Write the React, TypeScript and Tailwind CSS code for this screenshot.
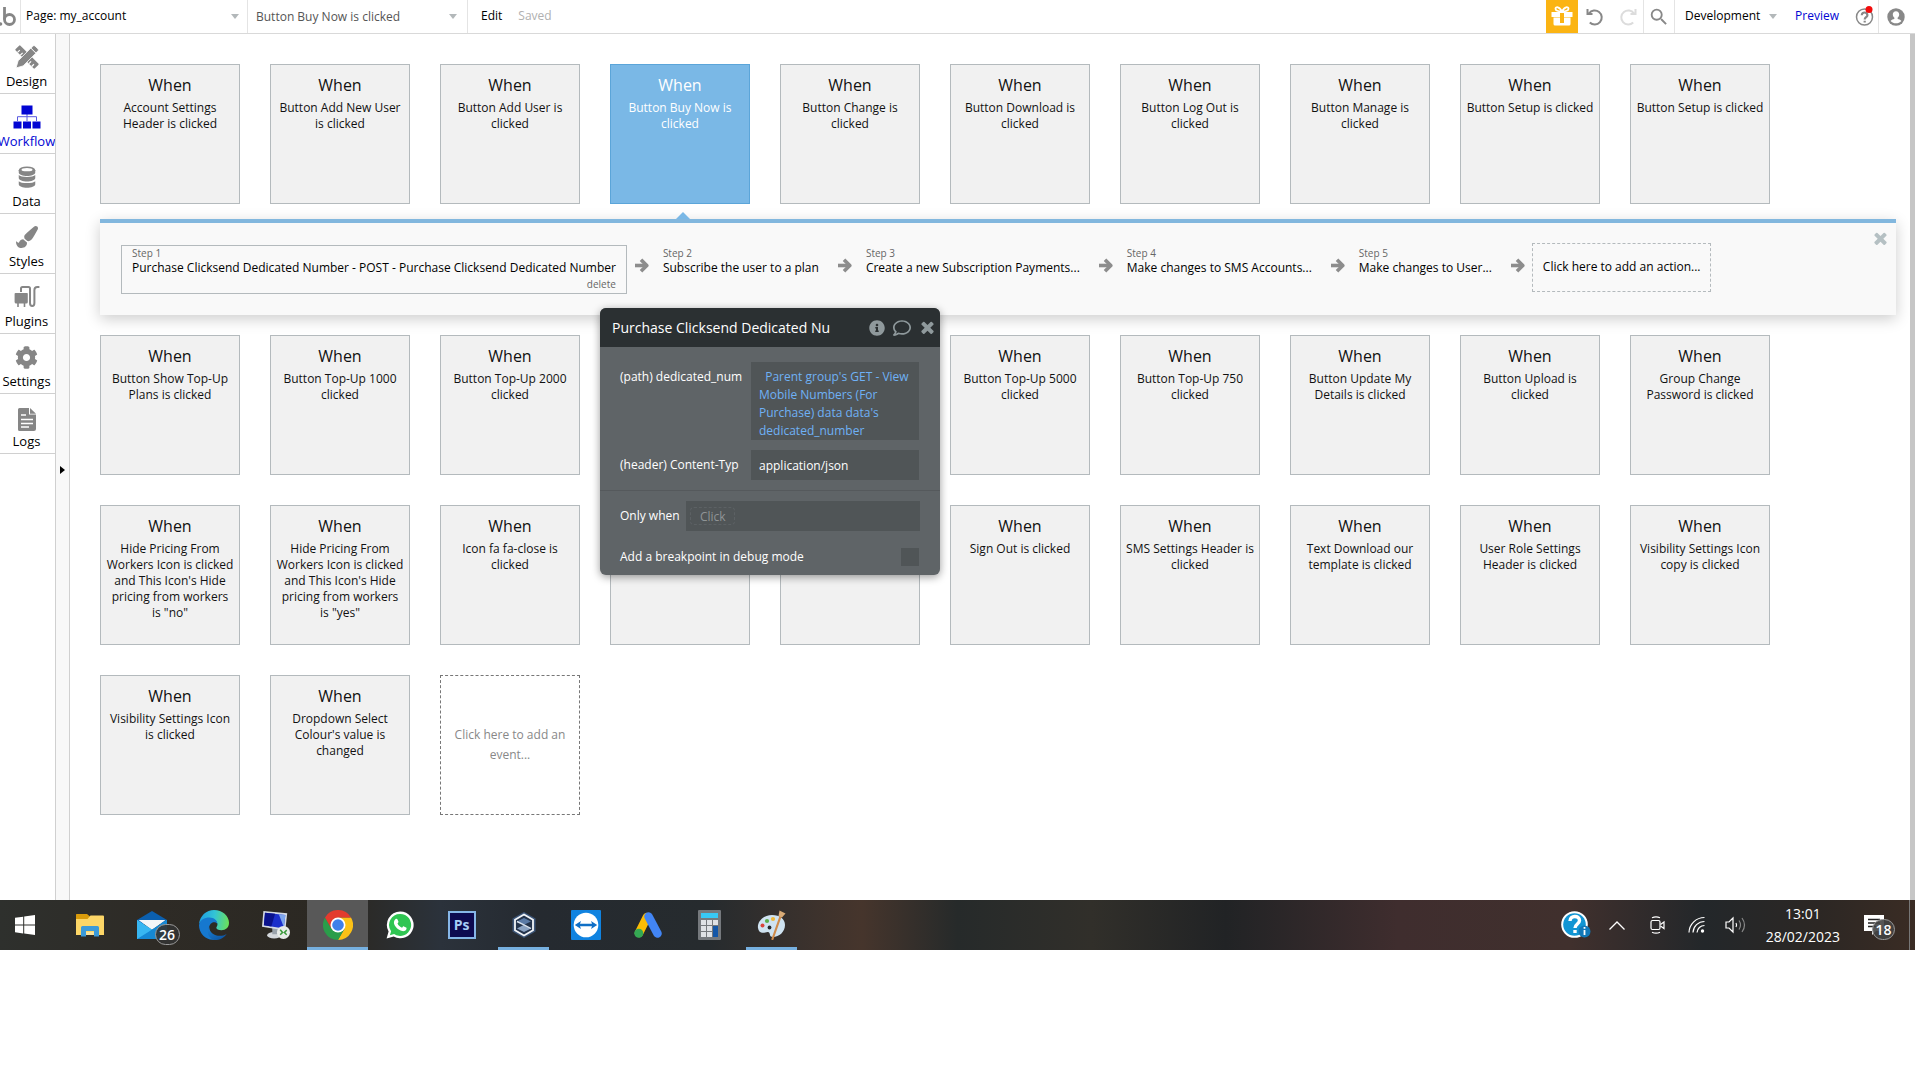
import type { ReactNode } from "react";
import { FaPaintBrush, FaCog, FaInfoCircle, FaRegComment } from "react-icons/fa";
import { MdSearch } from "react-icons/md";

interface WorkflowEvent {
  text: string | null;
  active?: boolean;
}

const topEvents: WorkflowEvent[] = [
  { text: "Account Settings Header is clicked" },
  { text: "Button Add New User is clicked" },
  { text: "Button Add User is clicked" },
  { text: "Button Buy Now is clicked", active: true },
  { text: "Button Change is clicked" },
  { text: "Button Download is clicked" },
  { text: "Button Log Out is clicked" },
  { text: "Button Manage is clicked" },
  { text: "Button Setup is clicked" },
  { text: "Button Setup is clicked" },
];

const otherEvents: WorkflowEvent[] = [
  { text: "Button Show Top-Up Plans is clicked" },
  { text: "Button Top-Up 1000 clicked" },
  { text: "Button Top-Up 2000 clicked" },
  { text: null },
  { text: null },
  { text: "Button Top-Up 5000 clicked" },
  { text: "Button Top-Up 750 clicked" },
  { text: "Button Update My Details is clicked" },
  { text: "Button Upload is clicked" },
  { text: "Group Change Password is clicked" },
  { text: "Hide Pricing From Workers Icon is clicked and This Icon's Hide pricing from workers is \"no\"" },
  { text: "Hide Pricing From Workers Icon is clicked and This Icon's Hide pricing from workers is \"yes\"" },
  { text: "Icon fa fa-close is clicked" },
  { text: null },
  { text: null },
  { text: "Sign Out is clicked" },
  { text: "SMS Settings Header is clicked" },
  { text: "Text Download our template is clicked" },
  { text: "User Role Settings Header is clicked" },
  { text: "Visibility Settings Icon copy is clicked" },
  { text: "Visibility Settings Icon is clicked" },
  { text: "Dropdown Select Colour's value is changed" },
];

const steps = [
  "Purchase Clicksend Dedicated Number - POST - Purchase Clicksend Dedicated Number",
  "Subscribe the user to a plan",
  "Create a new Subscription Payments...",
  "Make changes to SMS Accounts...",
  "Make changes to User...",
];

/* ---------- small icons ---------- */

function CloseIcon({ className }: { className?: string }) {
  return (
    <svg viewBox="300 300 1192 1256" className={className} fill="currentColor" aria-hidden="true">
      <path d="M1490 1322q0 40-28 68l-136 136q-28 28-68 28t-68-28l-294-294-294 294q-28 28-68 28t-68-28l-136-136q-28-28-28-68t28-68l294-294-294-294q-28-28-28-68t28-68l136-136q28-28 68-28t68 28l294 294 294-294q28-28 68-28t68 28l136 136q28 28 28 68t-28 68l-294 294 294 294q28 28 28 68z" />
    </svg>
  );
}

function StepArrow() {
  return (
    <svg viewBox="0 0 14 14" className="mt-[13px] h-[15px] w-[14px]" fill="none" stroke="#8d8d8d" strokeWidth="3.6" aria-hidden="true">
      <path d="M0 7h11" />
      <path d="M6 1.200L11.800 7 6 12.800" strokeLinejoin="round" />
    </svg>
  );
}

function Caret() {
  return (
    <svg viewBox="0 0 8 5" className="pointer-events-none h-[5px] w-2 shrink-0" fill="#b3b8ba" aria-hidden="true">
      <path d="M0 0h8L4 5z" />
    </svg>
  );
}

function DesignIcon() {
  return (
    <svg viewBox="0 0 24 24" className="h-6 w-6" aria-hidden="true">
      <g transform="rotate(-45 12 12)" fill="#868686">
        <rect x="8.600" y="-1.600" width="6.800" height="27.200" rx="1" />
        <path d="M8.600 2h3.200M8.600 6h3.200M8.600 18h3.200M8.600 22h3.200" stroke="#fff" strokeWidth="1.200" />
      </g>
      <g transform="rotate(45 12 12)" fill="#868686" stroke="#fff" strokeWidth="0.800">
        <rect x="8.400" y="-1.500" width="7.200" height="4.500" rx="1.500" />
        <path d="M8.400 3h7.200v18L12 27.500 8.400 21z" />
      </g>
    </svg>
  );
}

function WorkflowIcon() {
  return (
    <svg viewBox="0 0 28 24" className="h-6 w-7" aria-hidden="true">
      <path d="M14 8v8M4.500 16v-4.300h19V16" stroke="#5a5ae0" strokeWidth="1" fill="none" />
      <g fill="#0205d3">
        <rect x="8.500" y="0.500" width="11" height="9" />
        <rect x="0.500" y="16.500" width="8" height="7" />
        <rect x="10" y="16.500" width="8" height="7" />
        <rect x="19.500" y="16.500" width="8" height="7" />
      </g>
    </svg>
  );
}

function DataIcon() {
  return (
    <svg viewBox="0 0 18 24" className="h-[22px] w-[18px]" aria-hidden="true">
      <g fill="#868686">
        <path d="M0 16.500c2 2.800 16 2.800 18 0V20c0 5-18 5-18 0z" />
        <path d="M0 9.800c2 2.800 16 2.800 18 0v3.400c0 5-18 5-18 0z" />
        <path d="M0 4.500h18v2.600c0 5-18 5-18 0z" />
        <ellipse cx="9" cy="4.500" rx="9" ry="4" />
      </g>
      <ellipse cx="9" cy="4" rx="6" ry="1.800" fill="#fff" />
    </svg>
  );
}

function PluginIcon() {
  return (
    <svg viewBox="0 0 26 24" className="h-6 w-[26px]" fill="none" aria-hidden="true">
      <path d="M7 7V3.500Q7 2 8.500 2h6q1.500 0 1.500 1.500V18q0 3 2.200 3t2.200-3V5q0-3 3-3h2" stroke="#868686" strokeWidth="2" />
      <path d="M1.500 8h11.500q.8 0 .8.800V17q0 1.500-1.500 1.500h-10Q.6 18.500.6 17V9q0-1 .9-1z" fill="#868686" />
      <path d="M4 18v4M10.500 18v4" stroke="#868686" strokeWidth="1.600" />
    </svg>
  );
}

function LogsIcon() {
  return (
    <svg viewBox="0 0 18 23" className="mt-1 h-[23px] w-[18px]" aria-hidden="true">
      <path d="M1.500 0H11v6.500h7V21q0 2-2 2H1.500Q0 23 0 21.500v-20Q0 0 1.500 0z" fill="#868686" />
      <path d="M12 0l6 5.800h-6z" fill="#868686" />
      <path d="M3 7h5M3 11.500h12M3 15.500h12M3 19h8" stroke="#fff" strokeWidth="1.300" />
    </svg>
  );
}

/* ---------- taskbar icons ---------- */

function WindowsIcon() {
  return (
    <svg viewBox="0 0 20 20" className="h-5 w-5" fill="#fff" aria-hidden="true">
      <path d="M0 2.800l8.200-1.100v7.900H0zM9.200 1.500L20 0v9.600H9.200zM0 10.500h8.200v7.900L0 17.300zM9.200 10.500H20V20L9.200 18.500z" />
    </svg>
  );
}

function FolderIcon() {
  return (
    <svg viewBox="0 0 28 24" className="h-6 w-7" aria-hidden="true">
      <path d="M0 1.500Q0 1 .5 1H11l3 2.500V8H0z" fill="#d99b0b" />
      <path d="M0 6h11.500l3-3.500H27q1 0 1 1V22H0z" fill="#fcd667" />
      <path d="M5 23.500V14.500Q5 13 6.500 13h15q1.500 0 1.500 1.500v9h-5V18h-8v5.500z" fill="#3b9ad9" />
      <path d="M10 19h8v3h-8z" fill="#fbe39a" />
    </svg>
  );
}

function MailIcon() {
  return (
    <svg viewBox="0 0 30 28" className="h-7 w-[30px]" aria-hidden="true">
      <path d="M0 9L15 0l15 9v4H0z" fill="#0b5fae" />
      <path d="M1.500 9h27L15 19z" fill="#f4f6f8" />
      <path d="M0 9l15 10L30 9v19H0z" fill="#2ba5e6" />
      <path d="M0 28L15 18.500 30 9v19z" fill="#1688d4" />
      <path d="M0 9l15 9.500L0 28z" fill="#38b6f1" />
    </svg>
  );
}

function EdgeIcon() {
  return (
    <svg viewBox="0 0 32 32" className="h-[30px] w-[30px]" aria-hidden="true">
      <defs>
        <linearGradient id="edgeTop" x1="0" y1="0.400" x2="1" y2="0.500">
          <stop offset="0" stopColor="#1d9de2" />
          <stop offset="0.500" stopColor="#33c4d6" />
          <stop offset="1" stopColor="#6be05a" />
        </linearGradient>
        <linearGradient id="edgeLow" x1="0" y1="0" x2="1" y2="1">
          <stop offset="0" stopColor="#1a7fd4" />
          <stop offset="1" stopColor="#0c4f9c" />
        </linearGradient>
      </defs>
      <path d="M0 15C1 6 8 0 16 0c9 0 16 6.500 16 13.500 0 5-3.500 8-8 8-3.500 0-5.500-1.200-5.500-2.500 0-1 1.200-1.500 1.200-3.700C19.700 12 16 9 11.500 9 6 9 2 11.500 0 15z" fill="url(#edgeTop)" />
      <path d="M0 16C1 10.500 6 8 11 8c5 0 8.500 3 8.700 7-1-2-3.700-2.500-5.700-1.500-5 2.500-5.500 14 3 18C8 33 0 25.500 0 16z" fill="#1678cf" />
      <path d="M11 18c0 6 5.500 9.500 11 9.500 3 0 5.500-.7 7.500-2C27 29.500 22 32 17 32c-7-1-9.500-9-6-14z" fill="url(#edgeLow)" />
    </svg>
  );
}

function RemoteIcon() {
  return (
    <svg viewBox="0 0 30 32" className="h-[30px] w-7" aria-hidden="true">
      <ellipse cx="13" cy="27" rx="7.500" ry="3.500" fill="#d4d8dc" />
      <path d="M11 18l7 1v7h-7z" fill="#9aa3ab" />
      <path d="M1.500 1L27 3.500 25 22 0 18z" fill="#d5dbe4" />
      <path d="M3.200 3L25 5.200 23.300 19.800 2 16.300z" fill="#1b2fcb" />
      <path d="M3.200 3L14 4l-4 13.500-8-1.200z" fill="#0a128c" />
      <path d="M18 4.500l7 .7-1.500 13.500z" fill="#7da6ee" />
      <circle cx="23" cy="24" r="7" fill="#e8ece8" />
      <path d="M19.500 21l2.500 3-2.500 2.500M26.500 21.500l-2.500 2.500 2.500 2.500" stroke="#3a9a3a" strokeWidth="1.600" fill="none" />
    </svg>
  );
}

function ChromeIcon() {
  return (
    <svg viewBox="0 0 32 32" className="h-[30px] w-[30px]" aria-hidden="true">
      <path d="M16 8h13.860A16 16 0 0 1 16 32l6.930-12z" fill="#fbc116" />
      <path d="M9.070 20L2.140 8A16 16 0 0 0 16 32l6.930-12z" fill="#2a9d4a" />
      <path d="M9.070 20L2.140 8A16 16 0 0 1 29.860 8H16z" fill="#e33b2e" />
      <circle cx="16" cy="16" r="8" fill="#fff" />
      <circle cx="16" cy="16" r="6.200" fill="#3f80ea" />
    </svg>
  );
}

function WhatsAppIcon() {
  return (
    <svg viewBox="0 0 28 28" className="h-7 w-7" aria-hidden="true">
      <path d="M14.200.5A13.400 13.400 0 0 0 2.600 20.600L.6 27.500l7.100-1.900A13.400 13.400 0 1 0 14.200.5z" fill="#fff" />
      <path d="M14.200 2.900A11 11 0 0 0 5.100 20.200l-1.200 4 4.200-1.100A11 11 0 1 0 14.200 2.900z" fill="#2fc552" />
      <path d="M9.900 7.800c.5-.3 1.200-.2 1.500.4l1 2.300c.2.500 0 .8-.9 1.900.9 2 2.600 3.500 4.600 4.300 1-1.300 1.300-1.500 1.800-1.300l2.200 1.100c.6.300.6.800.3 1.700-.5 1.500-2.600 2.300-4.200 1.900-4.300-1.100-7.600-4.600-8.200-7.500-.3-1.700.4-3.900 1.900-4.800z" fill="#fff" />
    </svg>
  );
}

function BlueStackIcon() {
  return (
    <svg viewBox="0 0 26 28" className="h-7 w-[26px]" aria-hidden="true">
      <path d="M13 1l11.500 6.500v13L13 27 1.500 20.500v-13z" fill="#3c5578" />
      <path d="M13 3.500l9 5.200v10.600l-9 5.200-9-5.200V8.700z" fill="#24344c" stroke="#f2f5f8" strokeWidth="1.800" />
      <path d="M6 10.500L13 7l7 3.500-7 3.300z" fill="#5b7ba6" />
      <path d="M6 17.500l7-3.700 7 3.700-7 3.500z" fill="#8ba3c2" />
      <path d="M6 10.500l7 3.300 7 3.700" stroke="#d9e2ec" strokeWidth="1.400" fill="none" />
    </svg>
  );
}

function TeamViewerIcon() {
  return (
    <svg viewBox="0 0 30 30" className="h-[30px] w-[30px]" aria-hidden="true">
      <rect width="30" height="30" rx="1" fill="#1083e0" />
      <circle cx="15" cy="15" r="12.300" fill="#fff" />
      <path d="M3.800 15l6.200-4-1 2.800h12l-1-2.800 6.200 4-6.200 4 1-2.800H9l1 2.800z" fill="#0f6fc6" />
    </svg>
  );
}

function AdsIcon() {
  return (
    <svg viewBox="0 0 28 26" className="h-[26px] w-7" strokeLinecap="round" aria-hidden="true">
      <path d="M13 5L5 21" stroke="#fbbc04" strokeWidth="8.500" />
      <path d="M14.500 4.500l9 17" stroke="#4285f4" strokeWidth="8.500" />
      <circle cx="4.800" cy="21.200" r="4.500" fill="#34a853" />
    </svg>
  );
}

function CalculatorIcon() {
  return (
    <svg viewBox="0 0 23 30" className="h-[30px] w-[23px]" aria-hidden="true">
      <rect width="23" height="30" rx="1" fill="#75797d" />
      <rect x="3" y="3" width="17" height="5" fill="#38c8f4" />
      <g fill="#dfe2e5">
        <rect x="3" y="10" width="5" height="5" />
        <rect x="9" y="10" width="5" height="5" />
        <rect x="15" y="10" width="5" height="5" />
        <rect x="3" y="16" width="5" height="5" />
        <rect x="9" y="16" width="5" height="5" />
        <rect x="3" y="22" width="5" height="5" />
        <rect x="9" y="22" width="5" height="5" />
      </g>
      <rect x="15" y="16" width="5" height="11" fill="#1457a8" />
    </svg>
  );
}

function PaintIcon() {
  return (
    <svg viewBox="0 0 30 30" className="h-[30px] w-[30px]" aria-hidden="true">
      <path d="M1 18C0 11 7 5 15 5c8 0 13 4 13 10 0 7-6 12-12 12-4 0-2.500-3-4-4.500-2-1.500-4 .8-7 .3C3 22.500 1.500 21 1 18z" fill="#cfe3f1" />
      <circle cx="12.500" cy="17.500" r="1.900" fill="#26292d" />
      <circle cx="5.500" cy="15.500" r="2" fill="#d9453c" />
      <circle cx="10" cy="11" r="2.100" fill="#5cae4a" />
      <circle cx="16" cy="9" r="2.100" fill="#eeb83c" />
      <path d="M24 5l-8.500 24" stroke="#cf8b4b" strokeWidth="2.200" strokeLinecap="round" />
      <path d="M22.500.5l6 3-3.500 4-3.500-1.500z" fill="#d9ab76" />
    </svg>
  );
}

/* ---------- header ---------- */

function Header() {
  return (
    <header className="mr-[5px] flex h-[34px] items-stretch border-b border-[#d9d9d9] bg-white text-xs text-black">
      <div className="flex w-[21px] items-center border-r border-[#e4e4e4]">
        <svg viewBox="0 0 16 22" className="h-[22px] w-4" aria-hidden="true">
          <circle cx="0.500" cy="18" r="1.800" fill="#868686" />
          <path d="M4.500 1v12.500" stroke="#868686" strokeWidth="2.800" />
          <circle cx="9.500" cy="13.500" r="5" fill="none" stroke="#868686" strokeWidth="2.800" />
        </svg>
      </div>
      <label className="flex w-[227px] items-center border-r border-[#e4e4e4] pb-px pr-2">
        <select aria-label="Page" className="min-w-0 flex-1 appearance-none bg-transparent pl-[5px]">
          <option>Page: my_account</option>
        </select>
        <Caret />
      </label>
      <label className="flex w-[220px] items-center border-r border-[#e4e4e4] pr-[10px] text-[#555]">
        <select aria-label="Workflow" className="min-w-0 flex-1 appearance-none bg-transparent pl-2">
          <option>Button Buy Now is clicked</option>
        </select>
        <Caret />
      </label>
      <button type="button" className="pb-[2px] pl-[13px]">Edit</button>
      <span className="flex items-center pb-[2px] pl-4 text-[#b0b0b0]">Saved</span>

      <div className="ml-auto flex items-stretch">
        <button type="button" aria-label="Gift" className="flex w-8 items-center justify-center bg-[#fbb413] pb-[2px]">
          <svg viewBox="0 0 22 20" className="h-5 w-[22px]" aria-hidden="true">
            <path d="M10.500 5.500C7 5.500 4.500 4.500 4.500 2.800 4.500.5 8.500.2 11 5.500 13.500.2 17.500.5 17.500 2.800c0 1.700-2.500 2.700-6 2.700" fill="none" stroke="#fff" strokeWidth="1.800" />
            <path d="M.5 6h21v5h-21zM2.500 11.500h17V18q0 1.500-1.500 1.500H4Q2.500 19.500 2.500 18z" fill="#fff" />
            <path d="M9 7v10h4V7z" fill="#fbb413" />
          </svg>
        </button>
        <button type="button" aria-label="Undo" className="flex w-[34px] items-center justify-center">
          <svg viewBox="0 0 18 18" className="h-[18px] w-[18px]" fill="none" stroke="#888" strokeWidth="2" aria-hidden="true">
            <path d="M3 5.500A7 7 0 1 1 3.800 14.500M1.500 1v5h5" />
          </svg>
        </button>
        <button type="button" aria-label="Redo" className="flex w-8 items-center justify-center border-r border-[#e4e4e4]">
          <svg viewBox="0 0 18 18" className="h-[18px] w-[18px]" fill="none" stroke="#dcdcdc" strokeWidth="2" aria-hidden="true">
            <path d="M15 5.500A7 7 0 1 0 14.200 14.500M16.500 1v5h-5" />
          </svg>
        </button>
        <button type="button" aria-label="Search" className="flex w-[31px] items-center justify-center border-r border-[#e4e4e4]">
          <MdSearch className="h-[22px] w-[22px] text-[#888]" />
        </button>
        <label className="flex items-center gap-2 pb-px pl-[10px]">
          <select aria-label="Version" className="appearance-none bg-transparent">
            <option>Development</option>
          </select>
          <Caret />
        </label>
        <a href="#preview" className="flex items-center pb-px pl-[18px] text-[#0205d3]">Preview</a>
        <button type="button" aria-label="Help" className="ml-4 flex w-6 items-center border-r border-[#e4e4e4] pb-px">
          <svg viewBox="0 0 20 20" className="h-5 w-5 overflow-visible" fill="none" aria-hidden="true">
            <circle cx="9.500" cy="11" r="8" stroke="#888" strokeWidth="1.500" />
            <path d="M6.800 9.200c0-3.700 5.600-3.500 5.600 0 0 2-2.700 1.900-2.700 4.300M9.700 14.800v1.800" stroke="#888" strokeWidth="2.200" />
            <circle cx="14" cy="3.500" r="3.500" fill="#f30b0b" />
          </svg>
        </button>
        <button type="button" aria-label="Account" className="flex w-9 items-center justify-center pr-[2px]">
          <svg viewBox="0 0 18 18" className="h-[18px] w-[18px]" aria-hidden="true">
            <circle cx="9" cy="9" r="8.700" fill="#888" />
            <path d="M9 3.200c2 0 3.200 1.400 3.200 3.300 0 1.600-.9 2.700-1.600 3.200v1c.8.600 3.200.8 3.800 2.300-1.500 1.700-3.300 2.300-5.400 2.300S5.100 14.700 3.600 13c.6-1.500 3-1.700 3.800-2.300v-1c-.7-.5-1.600-1.600-1.600-3.200C5.800 4.600 7 3.200 9 3.200z" fill="#fff" />
          </svg>
        </button>
      </div>
    </header>
  );
}

/* ---------- sidebar ---------- */

const tabs: { label: string; icon: ReactNode; active?: boolean }[] = [
  { label: "Design", icon: <DesignIcon /> },
  { label: "Workflow", icon: <WorkflowIcon />, active: true },
  { label: "Data", icon: <DataIcon /> },
  { label: "Styles", icon: <FaPaintBrush className="h-[22px] w-[22px]" /> },
  { label: "Plugins", icon: <PluginIcon /> },
  { label: "Settings", icon: <FaCog className="h-[23px] w-[23px]" /> },
  { label: "Logs", icon: <LogsIcon /> },
];

function Sidebar() {
  return (
    <nav className="w-[56px] shrink-0 overflow-hidden border-r border-[#d0d0d0] bg-white text-[13px]">
      {tabs.map((tab) => (
        <a
          key={tab.label}
          href={`#${tab.label.toLowerCase()}`}
          className={`flex h-[60px] flex-col items-center border-b border-[#d0d0d0] pr-[2px] pt-[11px] ${
            tab.active ? "text-[#0205d3]" : "text-black"
          }`}
        >
          <span className={`flex h-6 items-center ${tab.active ? "" : "text-[#868686]"}`}>{tab.icon}</span>
          <span className="leading-6">{tab.label}</span>
        </a>
      ))}
    </nav>
  );
}

/* ---------- canvas ---------- */

function EventCard({ text, active }: WorkflowEvent) {
  return (
    <button
      type="button"
      aria-label={text ? undefined : "Event"}
      className={`flex h-[140px] w-[140px] flex-col items-center border px-[5px] pt-2 ${
        active ? "border-[#5ba5d9] bg-[#7ab8e6] text-white" : "border-[#b4babd] bg-[#f1f1f1] text-[#111]"
      }`}
    >
      {text && (
        <>
          <span className="text-base leading-6">When</span>
          <span className="mt-[3px] text-xs leading-4">{text}</span>
        </>
      )}
    </button>
  );
}

function PropertyEditor() {
  return (
    <form className="absolute left-[500px] top-[85px] z-10 w-[340px] overflow-hidden rounded-md bg-[#5f6467] text-xs text-white shadow-[0_2px_8px_rgba(0,0,0,0.4)]">
      <div className="flex h-[39px] items-center bg-[#2b3032] pl-3 pr-[6px] text-[#8f999c]">
        <input
          aria-label="Action name"
          defaultValue="Purchase Clicksend Dedicated Nu"
          className="min-w-0 flex-1 bg-transparent text-sm text-white"
        />
        <button type="button" aria-label="Info">
          <FaInfoCircle className="h-4 w-4" />
        </button>
        <button type="button" aria-label="Comment" className="ml-2">
          <FaRegComment className="h-[18px] w-[18px]" />
        </button>
        <button type="button" aria-label="Close editor" className="ml-[10px]">
          <CloseIcon className="h-[13px] w-[13px]" />
        </button>
      </div>
      <div className="flex flex-col gap-[10px] pb-[10px] pl-5 pr-[21px] pt-[15px]">
        <div className="flex items-start">
          <label htmlFor="path" className="w-[131px] shrink-0 whitespace-nowrap pt-[6px] leading-[18px]">(path) dedicated_num</label>
          <textarea
            id="path"
            rows={4}
            defaultValue={"  Parent group's GET - View Mobile Numbers (For Purchase) data data's dedicated_number"}
            className="block min-w-0 flex-1 resize-none overflow-hidden bg-[#505557] px-2 pt-[6px] leading-[18px] text-[#6fb1f5]"
          />
        </div>
        <div className="flex items-center">
          <label htmlFor="header" className="w-[131px] shrink-0">(header) Content-Typ</label>
          <input id="header" defaultValue="application/json" className="h-[30px] min-w-0 flex-1 bg-[#505557] px-2" />
        </div>
      </div>
      <div className="border-t border-[#55595c] pb-[9px] pl-5 pr-5 pt-[10px]">
        <div className="flex items-center">
          <label htmlFor="only" className="w-[66px] shrink-0">Only when</label>
          <div className="flex h-[30px] flex-1 items-center bg-[#505557] pl-1">
            <input
              id="only"
              placeholder="Click"
              className="h-[18px] w-[45px] rounded border border-dashed border-[#5c6164] bg-transparent pl-[9px] placeholder:text-[#8f9496]"
            />
          </div>
        </div>
        <div className="mt-[17px] flex h-[18px] items-center justify-between pr-px">
          <label htmlFor="breakpoint">Add a breakpoint in debug mode</label>
          <input id="breakpoint" type="checkbox" className="h-[18px] w-[18px] appearance-none bg-[#505557]" />
        </div>
      </div>
    </form>
  );
}

function StepsPanel() {
  return (
    <section className="relative mt-[15px] border-t-4 border-[#82b7de] bg-[#f9f9f9] pb-[21px] pl-[21px] pt-[22px] text-xs shadow-[0_4px_14px_rgba(0,0,0,0.2)]">
      <svg viewBox="0 0 14 7" className="absolute left-[576px] -top-[11px] h-[7px] w-[14px]" fill="#7ab8e6" aria-hidden="true">
        <path d="M0 7L7 0l7 7z" />
      </svg>
      <div className="flex items-start">
        {steps.map((step, i) => (
          <div key={step} className="flex items-start">
            <button
              type="button"
              className={`flex h-[49px] flex-col items-start whitespace-nowrap border px-[10px] pt-px ${
                i === 0 ? "border-[#b4babd]" : "border-transparent"
              }`}
            >
              <span className="text-[10px] leading-[13px] text-[#666]">Step {i + 1}</span>
              <span className="leading-4 text-black">{step}</span>
              {i === 0 && <span className="self-end text-[10px] leading-4 text-[#666]">delete</span>}
            </button>
            <span className="pl-2 pr-[3px]">
              <StepArrow />
            </span>
          </div>
        ))}
        <button type="button" className="-mt-[2px] ml-1 h-[49px] whitespace-nowrap border border-dashed border-[#b4babd] px-[10px] pb-[2px] text-black">
          Click here to add an action...
        </button>
      </div>
      <button type="button" aria-label="Close steps" className="absolute right-[9px] top-[9px] text-[#b5c0c3]">
        <CloseIcon className="h-[13px] w-[13px]" />
      </button>
      <PropertyEditor />
    </section>
  );
}

function Canvas() {
  return (
    <main className="min-w-0 flex-1 overflow-hidden bg-white pb-[85px] pl-[30px] pr-[14px] pt-[30px]">
      <div className="flex flex-wrap gap-[30px]">
        {topEvents.map((event, i) => (
          <EventCard key={i} {...event} />
        ))}
      </div>
      <StepsPanel />
      <div className="mt-5 flex flex-wrap gap-[30px]">
        {otherEvents.map((event, i) => (
          <EventCard key={i} {...event} />
        ))}
        <button type="button" className="h-[140px] w-[140px] border border-dashed border-[#777] px-3 text-xs leading-5 text-[#888]">
          Click here to add an event...
        </button>
      </div>
    </main>
  );
}

/* ---------- taskbar ---------- */

const apps: { name: string; icon: ReactNode; state?: "open" | "focused" }[] = [
  { name: "File Explorer", icon: <FolderIcon /> },
  {
    name: "Mail",
    icon: (
      <span className="relative">
        <MailIcon />
        <span className="absolute left-[18px] top-[13px] flex h-[21px] w-[25px] items-center justify-center rounded-full border border-[#999] bg-[#333]/90 text-sm font-semibold">
          26
        </span>
      </span>
    ),
  },
  { name: "Edge", icon: <EdgeIcon /> },
  { name: "Remote Desktop", icon: <RemoteIcon /> },
  { name: "Chrome", icon: <ChromeIcon />, state: "focused" },
  { name: "WhatsApp", icon: <WhatsAppIcon /> },
  {
    name: "Photoshop",
    icon: (
      <span className="flex h-7 w-7 items-center justify-center border-2 border-[#86b6e8] bg-[#0d0a50] text-sm font-bold text-[#a4cdf7]">
        Ps
      </span>
    ),
  },
  { name: "BlueStacks", icon: <BlueStackIcon />, state: "open" },
  { name: "TeamViewer", icon: <TeamViewerIcon /> },
  { name: "Google Ads", icon: <AdsIcon /> },
  { name: "Calculator", icon: <CalculatorIcon /> },
  { name: "Paint", icon: <PaintIcon />, state: "open" },
];

function Tray() {
  return (
    <div className="ml-auto flex items-center">
      <svg viewBox="0 0 30 28" className="h-7 w-[30px]" aria-hidden="true">
        <circle cx="13.500" cy="13.500" r="13.300" fill="#fff" />
        <circle cx="13.500" cy="13.500" r="11.300" fill="#1295d3" />
        <path d="M9 10c0-6 9.500-6 9.500-.5 0 3.500-4.500 3.500-4.500 7.500M14 19v3" stroke="#fff" strokeWidth="3.400" fill="none" />
        <circle cx="23.500" cy="20.500" r="6" fill="#1278b8" />
        <path d="M23.500 19v5M23.500 16v1.700" stroke="#fff" strokeWidth="1.800" />
      </svg>
      <svg viewBox="0 0 16 9" className="ml-[18px] h-[9px] w-4" fill="none" stroke="#fff" strokeWidth="1.300" aria-hidden="true">
        <path d="M.5 8.500L8 1l7.500 7.500" />
      </svg>
      <svg viewBox="0 0 16 18" className="ml-[25px] h-[18px] w-4" fill="none" stroke="#fff" strokeWidth="1.200" aria-hidden="true">
        <rect x="1" y="4.500" width="9" height="9" rx="1.500" />
        <path d="M10.500 8.500L14 6v6.500l-3.500-2.500M2 1.800q4-1.800 8 0M2 16.200q4 1.800 8 0" />
      </svg>
      <svg viewBox="0 0 18 18" className="ml-[22px] h-[18px] w-[18px]" fill="none" stroke="#fff" strokeWidth="1.200" aria-hidden="true">
        <path d="M1 16.500A15.500 15.500 0 0 1 16.500 1.500M5 16.500A11.500 11.500 0 0 1 16.500 5.500M9 16.500A7.500 7.500 0 0 1 16.500 9.500" />
        <circle cx="14.500" cy="15" r="1.700" fill="#fff" stroke="none" />
      </svg>
      <svg viewBox="0 0 22 20" className="ml-[19px] h-5 w-[22px]" fill="none" stroke="#fff" strokeWidth="1.200" aria-hidden="true">
        <path d="M1 7h3l4-4v14l-4-4H1zM11 8q1.200 2 0 4" />
        <path d="M14 5.500q3 4.500 0 9M17 3q5 7 0 14" stroke="#888" />
      </svg>
      <div className="ml-[19px] text-center text-sm leading-[23px]">
        <div>13:01</div>
        <div>28/02/2023</div>
      </div>
      <button type="button" aria-label="Notifications" className="relative ml-6 h-[30px] w-[33px]">
        <svg viewBox="0 0 20 20" className="h-5 w-5" aria-hidden="true">
          <path d="M0 0h20v16h-8l-4 4v-4H0z" fill="#fff" />
          <path d="M4 4.500h12M4 8h12M4 11.500h8" stroke="#222" strokeWidth="1.300" />
        </svg>
        <span className="absolute left-2 top-[9px] flex h-[21px] w-[23px] items-center justify-center rounded-full border border-[#999] bg-[#444]/90 text-sm font-semibold">
          18
        </span>
      </button>
      <span className="ml-3 h-[50px] w-1.5 border-l border-[#777]" />
    </div>
  );
}

function Taskbar() {
  return (
    <footer className="mr-[5px] flex h-[50px] items-center bg-[linear-gradient(90deg,#2e302d_0%,#2e2b26_8%,#2b2822_18%,#2b323b_23%,#252a30_28%,#262b2e_37%,#46352c_45%,#262a2a_50%,#312f2a_57%,#212325_64%,#3f2d2e_73%,#40302d_82%,#23272a_89%,#2c2724_95%,#3a2c24_100%)] text-white">
      <button type="button" aria-label="Start" className="mr-[9px] flex h-full w-[50px] items-center justify-center">
        <WindowsIcon />
      </button>
      <div className="flex h-full gap-px">
        {apps.map((app) => (
          <button
            key={app.name}
            type="button"
            aria-label={app.name}
            className={`relative flex w-[61px] items-center justify-center ${app.state === "focused" ? "bg-[#585858]" : ""}`}
          >
            {app.icon}
            {app.state && (
              <span
                className={`absolute bottom-0 h-[3px] bg-[#76b0e0] ${app.state === "focused" ? "inset-x-0" : "inset-x-[5px]"}`}
              />
            )}
          </button>
        ))}
      </div>
      <Tray />
    </footer>
  );
}

export default function App() {
  return (
    <div className="min-h-screen bg-white font-['Open_Sans','Noto_Sans',sans-serif]">
      <Header />
      <div className="mr-[5px] flex items-stretch">
        <Sidebar />
        <div className="flex w-[14px] shrink-0 items-center border-r border-[#d0d0d0] bg-[#f8f8f8] pl-1 pt-[6px]">
          <svg viewBox="0 0 5 8" className="h-2 w-[5px]" aria-hidden="true">
            <path d="M0 0l5 4-5 4z" />
          </svg>
        </div>
        <Canvas />
        <div className="w-[5px] shrink-0 bg-[#c6c6c6]" />
      </div>
      <Taskbar />
    </div>
  );
}
